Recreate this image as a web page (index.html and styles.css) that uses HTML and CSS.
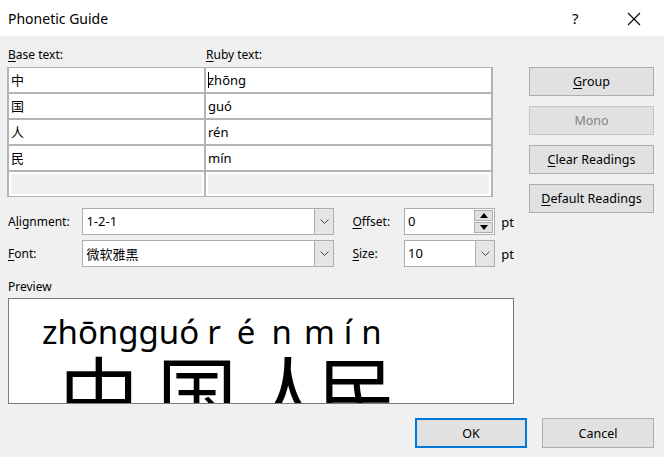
FILE: index.html
```html
<!DOCTYPE html>
<html lang="en">
<head>
  <meta charset="UTF-8">
  <title>Phonetic Guide</title>
  <link rel="stylesheet" href="styles.css">
</head>
<body>

<div class="window">
  <div class="titlebar">
    <span class="title">Phonetic Guide</span>
    <span class="title-help">?</span>
    <span class="title-close">
      <svg width="14" height="14" viewBox="0 0 14 14"><path d="M1 1 L13 13 M13 1 L1 13" stroke="#000" stroke-width="1.1" fill="none"/></svg>
    </span>
  </div>

  <div class="main">
    <div class="left">
      <div class="grid-labels">
        <span><u>B</u>ase text:</span>
        <span><u>R</u>uby text:</span>
      </div>

      <div class="reading-grid">
        <div class="cell cjk">中</div>
        <div class="cell"><span class="caret"></span>zhōng</div>
        <div class="cell cjk">国</div>
        <div class="cell">guó</div>
        <div class="cell cjk">人</div>
        <div class="cell">rén</div>
        <div class="cell cjk">民</div>
        <div class="cell">mín</div>
        <div class="cell empty"></div>
        <div class="cell empty"></div>
      </div>

      <div class="options">
        <div class="option-row">
          <label class="opt-label">A<u>l</u>ignment:</label>
          <div class="combo wide">
            <span class="combo-value">1-2-1</span>
            <span class="combo-btn"><svg width="9" height="5" viewBox="0 0 9 5"><path d="M0.5 0.5 L4.5 4.5 L8.5 0.5" stroke="#444" fill="none"/></svg></span>
          </div>
          <label class="opt-label short"><u>O</u>ffset:</label>
          <div class="combo narrow">
            <span class="combo-value">0</span>
            <span class="spin">
              <span class="spin-btn"><svg width="8" height="5" viewBox="0 0 8 5"><path d="M0 5 L4 0 L8 5 Z" fill="#000"/></svg></span>
              <span class="spin-btn"><svg width="8" height="5" viewBox="0 0 8 5"><path d="M0 0 L4 5 L8 0 Z" fill="#000"/></svg></span>
            </span>
          </div>
          <span class="unit">pt</span>
        </div>
        <div class="option-row">
          <label class="opt-label"><u>F</u>ont:</label>
          <div class="combo wide">
            <span class="combo-value cjk">微软雅黑</span>
            <span class="combo-btn"><svg width="9" height="5" viewBox="0 0 9 5"><path d="M0.5 0.5 L4.5 4.5 L8.5 0.5" stroke="#444" fill="none"/></svg></span>
          </div>
          <label class="opt-label short"><u>S</u>ize:</label>
          <div class="combo narrow">
            <span class="combo-value">10</span>
            <span class="combo-btn"><svg width="9" height="5" viewBox="0 0 9 5"><path d="M0.5 0.5 L4.5 4.5 L8.5 0.5" stroke="#444" fill="none"/></svg></span>
          </div>
          <span class="unit">pt</span>
        </div>
      </div>

      <div class="preview-label">Preview</div>
      <div class="preview">
        <!-- ruby line, spread 1-2-1 over the base characters -->
        <div class="py-row">
          <span>zhōngguó</span>
          <span class="sp-a">r</span>
          <span class="sp-b">é</span>
          <span class="sp-b">n</span>
          <span class="sp-c">m</span>
          <span class="sp-d">í</span>
          <span class="sp-d">n</span>
        </div>
        <div class="hz-row">
          <span class="hz">中</span>
          <span class="hz">国</span>
          <span class="hz">人</span>
          <span class="hz">民</span>
        </div>
      </div>
    </div>

    <div class="side-buttons">
      <button><u>G</u>roup</button>
      <button disabled>Mono</button>
      <button><u>C</u>lear Readings</button>
      <button><u>D</u>efault Readings</button>
    </div>
  </div>

  <div class="footer">
    <button class="default">OK</button>
    <button>Cancel</button>
  </div>
</div>

</body>
</html>
```

FILE: styles.css
```css
body {
  margin: 0;
  padding: 0;
  font-family: 'Noto Sans', 'Noto Sans CJK SC', sans-serif;
  font-size: 12px;
  color: #000;
}

u {
  text-decoration: underline;
  text-underline-offset: 2px;
}

.cjk {
  font-family: 'Noto Sans CJK SC', sans-serif;
}

.window {
  width: 664px;
  height: 457px;
  background-color: #f0f0f0;
  overflow: hidden;
}

.titlebar {
  height: 36px;
  background-color: #fff;
  display: flex;
  align-items: center;
  padding: 0 0 0 8px;
}

.title {
  font-size: 14px;
  flex: 1;
}

.title-help {
  font-size: 15px;
  width: 55px;
}

.title-close {
  width: 37px;
  display: flex;
  padding-top: 2px;
}

.main {
  display: flex;
  padding: 0 10px 0 8px;
}

.left {
  width: 506px;
}

.grid-labels {
  display: grid;
  grid-template-columns: 198px 1fr;
  width: 486px;
  padding-top: 11px;
  line-height: 16px;
  margin-bottom: 4px;
}

.reading-grid {
  display: grid;
  grid-template-columns: 195px 1fr;
  gap: 2px;
  width: 482px;
  padding: 1px 2px 1px 2px;
  background-color: #b4b4b4;
  margin-left: -1px;
}

.cell {
  height: 24px;
  line-height: 24px;
  padding-left: 2px;
  background-color: #fff;
  font-size: 13px;
  display: flex;
  align-items: center;
}

.cell.empty {
  background-color: #f0f0f0;
  box-shadow: inset 0 0 0 2px #fff;
}

.caret {
  display: inline-block;
  width: 1px;
  height: 16px;
  background-color: #000;
  margin-right: -1px;
}

.options {
  margin-top: 11px;
  display: flex;
  flex-direction: column;
  gap: 5px;
}

.option-row {
  display: flex;
  align-items: center;
  height: 27px;
}

.opt-label {
  width: 75px;
}

.opt-label.short {
  width: 52px;
  margin-left: 18px;
}

.combo {
  height: 25px;
  display: flex;
  background-color: #fff;
  border: 1px solid #adadad;
}

.combo.wide {
  width: 252px;
}

.combo.narrow {
  width: 90px;
}

.combo-value {
  flex: 1;
  line-height: 25px;
  padding-left: 3px;
  font-size: 13px;
}

.combo-btn {
  width: 18px;
  background-color: #e5e5e5;
  border-left: 1px solid #adadad;
  display: flex;
  align-items: center;
  justify-content: center;
}

.spin {
  width: 19px;
  display: flex;
  flex-direction: column;
  gap: 1px;
  padding: 1px;
}

.spin-btn {
  flex: 1;
  background-color: #e1e1e1;
  border: 1px solid #adadad;
  display: flex;
  align-items: center;
  justify-content: center;
}

.unit {
  margin-left: 6px;
  font-size: 13px;
}

.preview-label {
  margin-top: 12px;
  line-height: 16px;
  margin-bottom: 3px;
}

.preview {
  height: 104px;
  background-color: #fff;
  border: 1px solid #7a7a7a;
  overflow: hidden;
}

.py-row {
  display: flex;
  padding: 14px 0 0 33px;
  font-family: 'Noto Sans', sans-serif;
  font-size: 33px;
  line-height: 38px;
}

.sp-a { margin-left: 8px; }
.sp-b { margin-left: 16px; }
.sp-c { margin-left: 12px; }
.sp-d { margin-left: 9px; }

.hz-row {
  display: flex;
  padding-left: 50px;
}

.hz {
  font-family: 'Noto Sans CJK SC', sans-serif;
  font-size: 80px;
  line-height: 76px;
  width: 80px;
}

.hz:nth-child(2) { margin-left: 18px; }
.hz:nth-child(3) { margin-left: 11px; }
.hz:nth-child(4) { margin-left: -11px; }

.side-buttons {
  margin-left: 15px;
  margin-top: 31px;
  width: 125px;
  display: flex;
  flex-direction: column;
  gap: 10px;
}

button {
  font-family: 'Noto Sans', sans-serif;
  font-size: 12.5px;
  height: 29px;
  background-color: #e1e1e1;
  border: 1px solid #adadad;
  color: #000;
  padding: 0;
}

button:disabled {
  color: #838383;
  background-color: #e1e1e1;
  border-color: #c5c5c5;
}

.footer {
  display: flex;
  justify-content: flex-end;
  gap: 15px;
  padding: 14px 10px 0 0;
}

.footer button {
  width: 112px;
  height: 30px;
}

.footer button.default {
  border: 2px solid #0078d7;
}
```
